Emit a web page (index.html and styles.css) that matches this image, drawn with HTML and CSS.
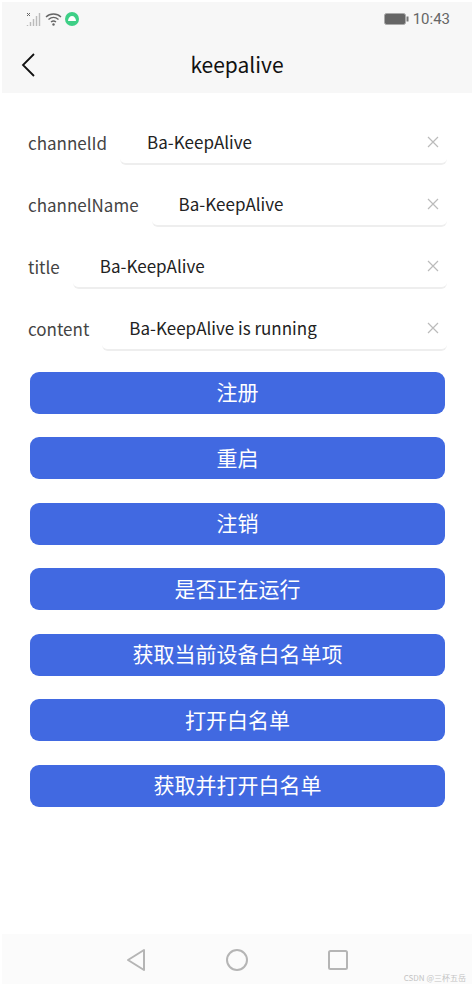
FILE: index.html
```html
<!DOCTYPE html>
<html lang="zh">
<head>
    <meta charset="UTF-8">
    <meta name="viewport" content="width=device-width, initial-scale=1.0">
    <title>keepalive</title>
    <link rel="stylesheet" href="styles.css">
</head>
<body>
    <div class="page">
        <header class="top">
            <div class="status">
                <div class="status-left">
                    <svg width="16" height="14" viewBox="0 0 16 14" class="signal">
                        <path d="M1 1l3 3M4 1L1 4" stroke="#666" stroke-width="1" fill="none"/>
                        <path d="M1.500 14v-1M4.500 14v-4M7.500 14V7M10.500 14V4M13.500 14V1" stroke="#bbb" stroke-width="1.400" fill="none"/>
                    </svg>
                    <svg width="17" height="14" viewBox="0 0 17 14" class="wifi">
                        <path d="M1 5c4-4 11-4 15 0M3.500 7.500c3-2.600 7-2.600 10 0M6 10c1.500-1.200 3.500-1.200 5 0" stroke="#666" stroke-width="1.300" fill="none"/>
                        <circle cx="8.500" cy="12.500" r="1.200" fill="#666"/>
                    </svg>
                    <svg width="14" height="14" viewBox="0 0 14 14">
                        <circle cx="7" cy="7" r="7" fill="#3ecf86"/>
                        <path d="M3 9c0-3 2-5 4-5s4 2 4 5z" fill="#fff"/>
                    </svg>
                </div>
                <div class="status-right">
                    <svg width="25" height="12" viewBox="0 0 25 12">
                        <rect x="0.500" y="0.500" width="21" height="11" rx="2" fill="#666" stroke="#aaa"/>
                        <rect x="22.500" y="3.500" width="2" height="5" fill="#777"/>
                    </svg>
                    <span class="time">10:43</span>
                </div>
            </div>
            <div class="titlebar">
                <svg class="back" width="14" height="24" viewBox="0 0 14 24">
                    <path d="M13 1L2 12l11 11" stroke="#111" stroke-width="1.800" fill="none"/>
                </svg>
                <h1>keepalive</h1>
            </div>
        </header>

        <form class="fields">
            <div class="field">
                <label>channelId</label>
                <div class="input"><span class="value">Ba-KeepAlive</span><svg class="clear" width="12" height="12" viewBox="0 0 12 12"><path d="M1 1l10 10M11 1L1 11" stroke="#bbb" stroke-width="1.200"/></svg></div>
            </div>
            <div class="field">
                <label>channelName</label>
                <div class="input"><span class="value">Ba-KeepAlive</span><svg class="clear" width="12" height="12" viewBox="0 0 12 12"><path d="M1 1l10 10M11 1L1 11" stroke="#bbb" stroke-width="1.200"/></svg></div>
            </div>
            <div class="field">
                <label>title</label>
                <div class="input"><span class="value">Ba-KeepAlive</span><svg class="clear" width="12" height="12" viewBox="0 0 12 12"><path d="M1 1l10 10M11 1L1 11" stroke="#bbb" stroke-width="1.200"/></svg></div>
            </div>
            <div class="field">
                <label>content</label>
                <div class="input"><span class="value">Ba-KeepAlive is running</span><svg class="clear" width="12" height="12" viewBox="0 0 12 12"><path d="M1 1l10 10M11 1L1 11" stroke="#bbb" stroke-width="1.200"/></svg></div>
            </div>
        </form>

        <div class="actions">
            <button type="button">注册</button>
            <button type="button">重启</button>
            <button type="button">注销</button>
            <button type="button">是否正在运行</button>
            <button type="button">获取当前设备白名单项</button>
            <button type="button">打开白名单</button>
            <button type="button">获取并打开白名单</button>
        </div>

        <footer class="navbar">
            <svg width="20" height="24" viewBox="0 0 20 24">
                <path d="M18 2v20L2 12z" stroke="#b5b5b5" stroke-width="2" fill="none" stroke-linejoin="round"/>
            </svg>
            <svg width="22" height="22" viewBox="0 0 22 22">
                <circle cx="11" cy="11" r="10" stroke="#b5b5b5" stroke-width="2" fill="none"/>
            </svg>
            <svg width="20" height="20" viewBox="0 0 20 20">
                <rect x="1" y="1" width="18" height="18" rx="1.500" stroke="#b5b5b5" stroke-width="2" fill="none"/>
            </svg>
            <span class="watermark">CSDN @三杯五岳</span>
        </footer>
    </div>
</body>
</html>
```

FILE: styles.css
```css
* {
    box-sizing: border-box;
}
body {
    margin: 0;
    background-color: #fff;
    font-family: "Noto Sans CJK SC", "Noto Sans", sans-serif;
}
.page {
    position: relative;
    width: 474px;
    height: 984px;
    padding: 2px 2px 0;
    display: flex;
    flex-direction: column;
}
.top {
    background-color: #f7f7f7;
    height: 91px;
}
.status {
    height: 32px;
    padding: 2px 22px 0 24px;
    display: flex;
    justify-content: space-between;
    align-items: center;
}
.status-left, .status-right {
    display: flex;
    align-items: center;
    gap: 3px;
}
.status-right {
    gap: 4px;
}
.time {
    font-family: "Roboto", sans-serif;
    font-size: 15px;
    color: #666;
}
.titlebar {
    position: relative;
    height: 59px;
    display: flex;
    align-items: center;
    justify-content: center;
}
.back {
    position: absolute;
    left: 19px;
    top: 19px;
}
h1 {
    margin: 0;
    font-size: 21px;
    font-weight: 400;
    color: #111;
}
.fields {
    padding: 20px 25px 0 26px;
    display: flex;
    flex-direction: column;
    gap: 10px;
}
.field {
    height: 52px;
    display: flex;
    align-items: center;
}
.field label {
    font-size: 17px;
    color: #444;
    margin-right: 13px;
    margin-top: 6px;
}
.input {
    flex: 1;
    height: 52px;
    padding: 6px 8px 0 27px;
    display: flex;
    align-items: center;
    justify-content: space-between;
    border-bottom: 2px solid #eee;
    border-radius: 0 0 6px 6px;
}
.value {
    font-size: 17px;
    color: #222;
}
.clear {
    margin-top: 2px;
}
.actions {
    padding: 20.500px 27px 0 28px;
    display: flex;
    flex-direction: column;
    gap: 23.500px;
}
button {
    height: 42px;
    border: none;
    border-radius: 9px;
    background-color: #4169e1;
    color: #fff;
    font-family: "Noto Sans CJK SC", sans-serif;
    font-size: 21px;
    padding: 0 0 3px;
}
.navbar {
    position: absolute;
    left: 2px;
    right: 2px;
    bottom: 0;
    height: 50px;
    padding-top: 1px;
    background-color: #fbfbfb;
    display: flex;
    justify-content: center;
    align-items: center;
    gap: 80px;
}
.watermark {
    position: absolute;
    right: 6px;
    bottom: 1px;
    font-size: 8px;
    color: #c4c4c4;
}
```
